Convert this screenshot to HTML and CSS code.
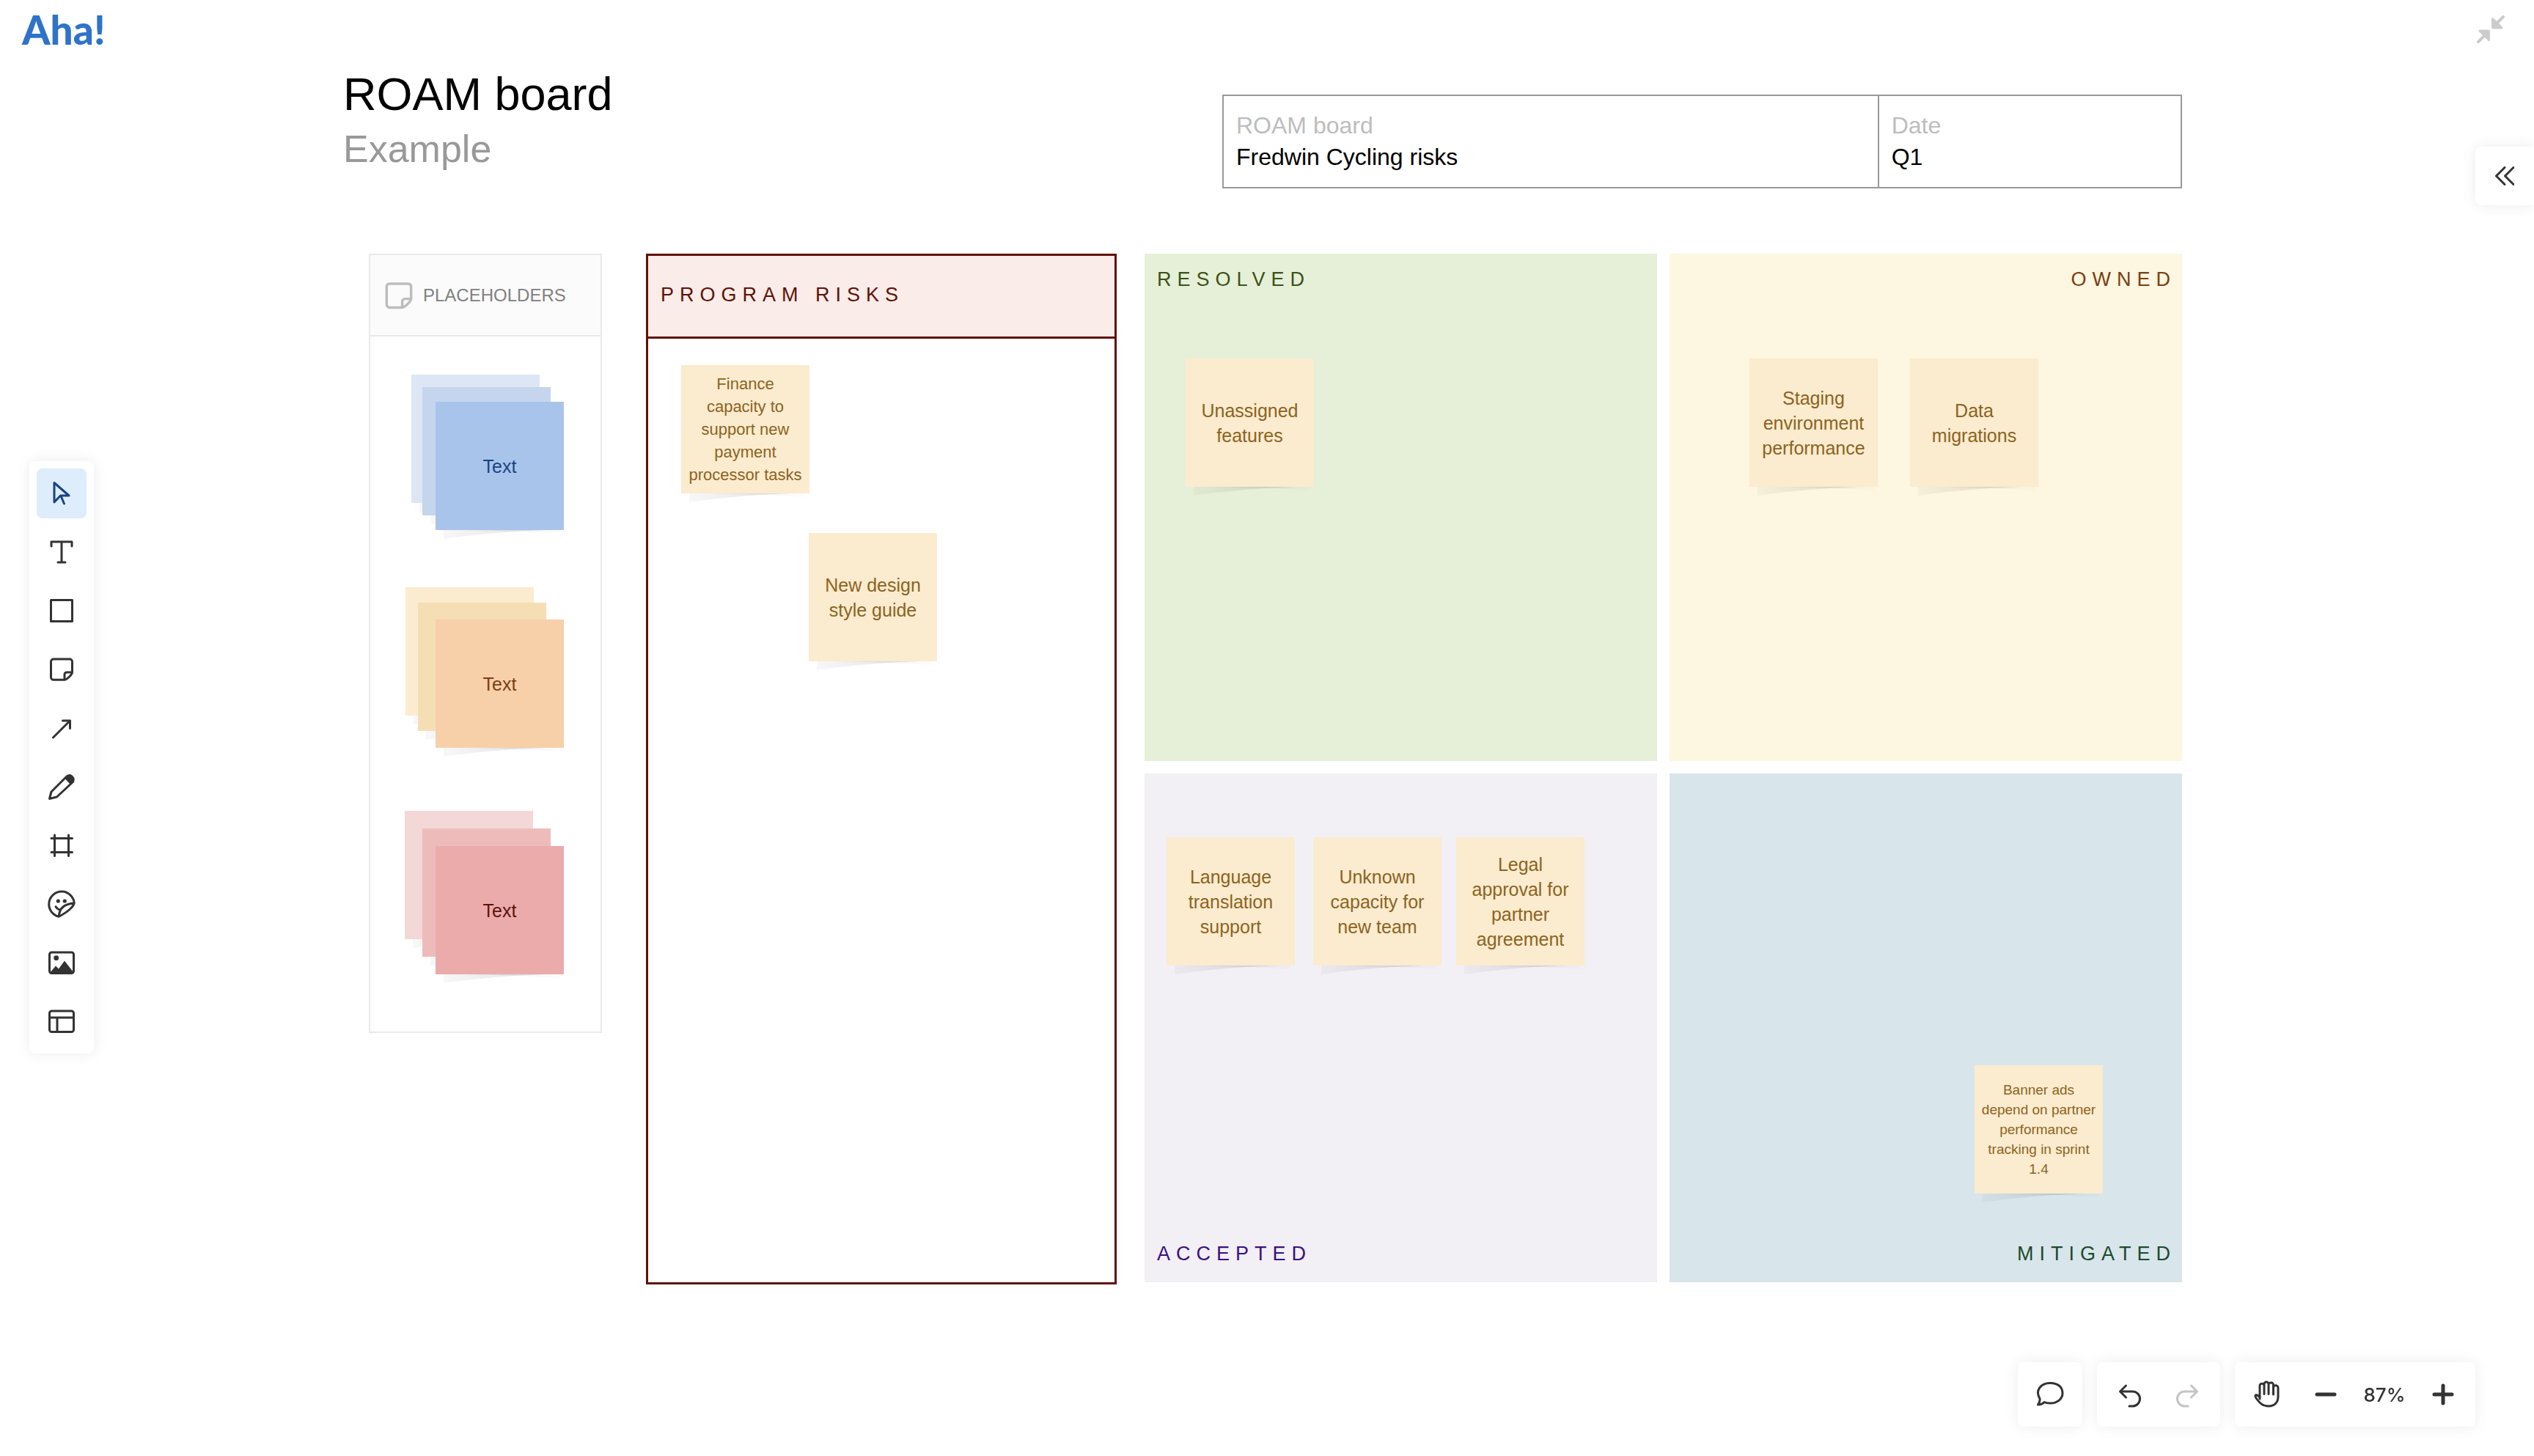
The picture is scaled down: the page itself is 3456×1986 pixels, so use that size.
FILE: index.html
```html
<!DOCTYPE html>
<html lang="en">
<head>
    <meta charset="UTF-8">
    <meta name="viewport" content="width=device-width, initial-scale=1.0">
    <title>ROAM board</title>
    <link rel="stylesheet" href="styles.css">
</head>
<body>

    <!-- Shared shapes -->
    <svg class="defs" width="0" height="0" aria-hidden="true">
        <defs>
            <linearGradient id="shadowLeft">
                <stop offset="0" stop-color="#000" stop-opacity="0.03"/>
                <stop offset="1" stop-color="#000" stop-opacity="0.12"/>
            </linearGradient>
            <linearGradient id="shadowRight">
                <stop offset="0" stop-color="#000" stop-opacity="0.08"/>
                <stop offset="1" stop-color="#000" stop-opacity="0.01"/>
            </linearGradient>
            <symbol id="noteShadow" viewBox="0 0 175 12">
                <path d="M11 0H150Q80 2 11 12Z" fill="url(#shadowLeft)"/>
                <path d="M40 0H170V5Q110 1 40 0Z" fill="url(#shadowRight)"/>
            </symbol>
            <symbol id="noteIcon" viewBox="0 0 40 40">
                <path d="M9 6H31a3.500 3.500 0 0 1 3.500 3.500V24c0 3-7.500 10.300-10.500 10.300H9A3.500 3.500 0 0 1 5.500 31V9.500A3.500 3.500 0 0 1 9 6ZM24 34V27a3 3 0 0 1 3-3h7"/>
            </symbol>
        </defs>
    </svg>

    <!-- Header -->
    <header class="topbar">
        <a class="logo" href="#">Aha!</a>
        <button class="collapse" type="button" aria-label="Exit full screen">
            <svg width="38" height="38" viewBox="0 0 38 38">
                <path d="M36 2 27 11M2 36l9-9" stroke="currentColor" stroke-width="4" stroke-linecap="round"/>
                <path d="M21.500 4.500v11q0 1.500 1.500 1.500h11L21.500 4.500ZM16.500 33.500v-11q0-1.500-1.500-1.500H4l12.500 12.500Z" fill="currentColor" stroke="currentColor" stroke-width="3" stroke-linejoin="round"/>
            </svg>
        </button>
    </header>

    <main class="workspace">

        <!-- Drawing tools -->
        <nav class="toolbar" aria-label="Tools">
            <button class="tool active" type="button" aria-label="Select">
                <svg class="icon" viewBox="0 0 40 40"><path d="M10 5.500V32l8.500-9H30ZM19 23.500l4.500 10.500"/></svg>
            </button>
            <button class="tool" type="button" aria-label="Text tool">
                <svg class="icon" viewBox="0 0 40 40"><path d="M6 12V6H34v6M20 6V34M15 34H25"/></svg>
            </button>
            <button class="tool" type="button" aria-label="Shape">
                <svg class="icon" viewBox="0 0 40 40"><path d="M5.500 5.500H34.500V34.500H5.500Z"/></svg>
            </button>
            <button class="tool" type="button" aria-label="Sticky note">
                <svg class="icon"><use href="#noteIcon"/></svg>
            </button>
            <button class="tool" type="button" aria-label="Line">
                <svg class="icon" viewBox="0 0 40 40"><path d="M8.500 33 31.500 10M21.500 10h10v10.500"/></svg>
            </button>
            <button class="tool" type="button" aria-label="Pen">
                <svg class="icon" viewBox="0 0 40 40">
                    <path d="M3.500 36.500 6 27 27 6a5.700 5.700 0 0 1 8 8L13.500 34Z"/>
                    <path d="M24 8.500 28 4.500Q31 2 34 5L36 7Q38 10 36 13L32 17Z" fill="currentColor" stroke="none"/>
                </svg>
            </button>
            <button class="tool" type="button" aria-label="Frame">
                <svg class="icon" viewBox="0 0 40 40"><path d="M10.500 6V34.500M29.500 6V34.500M6 10.500H34.500M6 29.500H34.500"/></svg>
            </button>
            <button class="tool" type="button" aria-label="Sticker">
                <svg class="icon" viewBox="0 0 40 40">
                    <path d="M16.300 37.300A17.300 17.300 0 1 1 37.300 19Q36 23 31 27.500T16.300 37.300ZM16.300 37.300Q17 20 37.300 19M12 23.700Q14.500 27.500 18.700 28"/>
                    <circle cx="15.300" cy="16" r="2.600" fill="currentColor" stroke="none"/>
                    <circle cx="24.300" cy="16" r="2.600" fill="currentColor" stroke="none"/>
                </svg>
            </button>
            <button class="tool" type="button" aria-label="Image">
                <svg class="icon" viewBox="0 0 40 40">
                    <rect x="3.500" y="6" width="33" height="28.500" rx="3"/>
                    <circle cx="12.700" cy="13.700" r="3.400" fill="currentColor" stroke="none"/>
                    <path d="M4 34 12 24.500 16 28.500 24 17.500 36 33V35H5Z" fill="currentColor" stroke="none"/>
                </svg>
            </button>
            <button class="tool" type="button" aria-label="Template">
                <svg class="icon" viewBox="0 0 40 40">
                    <rect x="3.500" y="6" width="33" height="28.500" rx="3"/>
                    <path d="M4 15H36M14 15V34"/>
                </svg>
            </button>
        </nav>

        <!-- Board -->
        <section class="board">
            <div class="board-head">
                <div>
                    <h1 class="title">ROAM board</h1>
                    <p class="subtitle">Example</p>
                </div>
                <dl class="info">
                    <div class="info-cell">
                        <dt>ROAM board</dt>
                        <dd>Fredwin Cycling risks</dd>
                    </div>
                    <div class="info-cell">
                        <dt>Date</dt>
                        <dd>Q1</dd>
                    </div>
                </dl>
            </div>

            <div class="columns">
                <div class="placeholders">
                    <div class="placeholders-head">
                        <svg class="icon icon-note"><use href="#noteIcon"/></svg>
                        <h2 class="placeholders-title">PLACEHOLDERS</h2>
                    </div>
                    <div class="placeholders-body">
                        <div class="note blue-1"><svg class="shadow"><use href="#noteShadow"/></svg></div>
                        <div class="note blue-2"><svg class="shadow"><use href="#noteShadow"/></svg></div>
                        <div class="note blue-3">Text<svg class="shadow"><use href="#noteShadow"/></svg></div>

                        <div class="note orange-1"><svg class="shadow"><use href="#noteShadow"/></svg></div>
                        <div class="note orange-2"><svg class="shadow"><use href="#noteShadow"/></svg></div>
                        <div class="note orange-3">Text<svg class="shadow"><use href="#noteShadow"/></svg></div>

                        <div class="note red-1"><svg class="shadow"><use href="#noteShadow"/></svg></div>
                        <div class="note red-2"><svg class="shadow"><use href="#noteShadow"/></svg></div>
                        <div class="note red-3">Text<svg class="shadow"><use href="#noteShadow"/></svg></div>
                    </div>
                </div>

                <div class="risks">
                    <div class="risks-head"><h2 class="label">PROGRAM RISKS</h2></div>
                    <div class="risks-body">
                        <div class="note note-medium note-finance">Finance capacity to support new payment processor tasks<svg class="shadow"><use href="#noteShadow"/></svg></div>
                        <div class="note note-design">New design style guide<svg class="shadow"><use href="#noteShadow"/></svg></div>
                    </div>
                </div>

                <div class="quadrants">
                    <div class="quadrant resolved">
                        <h2 class="label">RESOLVED</h2>
                        <div class="note note-unassigned">Unassigned features<svg class="shadow"><use href="#noteShadow"/></svg></div>
                    </div>
                    <div class="quadrant owned">
                        <h2 class="label">OWNED</h2>
                        <div class="note note-staging">Staging environment performance<svg class="shadow"><use href="#noteShadow"/></svg></div>
                        <div class="note note-data">Data migrations<svg class="shadow"><use href="#noteShadow"/></svg></div>
                    </div>
                    <div class="quadrant accepted">
                        <h2 class="label">ACCEPTED</h2>
                        <div class="note note-language">Language translation support<svg class="shadow"><use href="#noteShadow"/></svg></div>
                        <div class="note note-unknown">Unknown capacity for new team<svg class="shadow"><use href="#noteShadow"/></svg></div>
                        <div class="note note-legal">Legal approval for partner agreement<svg class="shadow"><use href="#noteShadow"/></svg></div>
                    </div>
                    <div class="quadrant mitigated">
                        <h2 class="label">MITIGATED</h2>
                        <div class="note note-small note-banner">Banner ads depend on partner performance tracking in sprint 1.4<svg class="shadow"><use href="#noteShadow"/></svg></div>
                    </div>
                </div>
            </div>
        </section>

        <button class="panel-toggle" type="button" aria-label="Open panel">
            <svg class="icon icon-chevrons" viewBox="0 0 26 26"><path d="M13 1.500 1.500 13 13 24.500M25 1.500 13.500 13 25 24.500"/></svg>
        </button>
    </main>

    <!-- Canvas controls -->
    <div class="controls">
        <div class="control-group">
            <button class="tool" type="button" aria-label="Comment">
                <svg class="icon" viewBox="0 0 40 40"><path d="M6 26C-1 14 8 4.500 20 4.500S37 11 37 18.500 30 32 20 32Q15 32 12 30.500 9 34 3.500 34 6.500 30 6 26Z"/></svg>
            </button>
        </div>
        <div class="control-group">
            <button class="tool" type="button" aria-label="Undo">
                <svg class="icon" viewBox="0 0 40 40"><path d="M15.500 8 7.500 16l8 8M8 16H24.500a10 10 0 0 1 0 20H20"/></svg>
            </button>
            <button class="tool" type="button" aria-label="Redo" disabled>
                <svg class="icon" viewBox="0 0 40 40"><path d="M24.500 8 32.500 16l-8 8M32 16H15.500a10 10 0 0 0 0 20H20"/></svg>
            </button>
        </div>
        <div class="control-group">
            <button class="tool" type="button" aria-label="Pan">
                <svg class="icon" viewBox="0 0 40 40"><path d="M10 26V8.500A3 3 0 0 1 16 8V19.500M16 8V6A3 3 0 0 1 22 6V19.500M22 6.500A3 3 0 0 1 28.500 8V20M28.500 10.500A3 3 0 0 1 35 11.500V23C35 31 30 36 22 36 14 36 10 32 5 25 2 20 6 19 10 24"/></svg>
            </button>
            <button class="tool" type="button" aria-label="Zoom out">
                <svg class="icon icon-bold" viewBox="0 0 40 40"><path d="M8 20H32"/></svg>
            </button>
            <button class="tool zoom" type="button">87%</button>
            <button class="tool" type="button" aria-label="Zoom in">
                <svg class="icon icon-bold" viewBox="0 0 40 40"><path d="M8 20H32M20 8V32"/></svg>
            </button>
        </div>
    </div>

</body>
</html>
```
FILE: styles.css
```css
/* styles.css */

* {
    box-sizing: border-box;
}

body {
    font-family: "Liberation Sans", Arial, sans-serif;
    background-color: #fff;
    color: #000;
    margin: 0;
    min-height: 100vh;
    display: flex;
    flex-direction: column;
}

h1, h2, p, dl, dd {
    margin: 0;
    font-weight: normal;
}

button {
    border: 0;
    padding: 0;
    background: none;
    font: inherit;
    color: inherit;
    cursor: pointer;
}

.defs {
    position: absolute;
}

/* Header styles */
.topbar {
    display: flex;
    justify-content: space-between;
    align-items: center;
    height: 80px;
    padding: 0 40px 0 30px;
}

.logo {
    font-family: Lato, sans-serif;
    font-size: 55px;
    font-weight: 900;
    line-height: 80px;
    color: #2f73c9;
    text-decoration: none;
}

.collapse {
    color: #ccc;
    line-height: 0;
}

.workspace {
    flex: 1;
    display: flex;
    align-items: flex-start;
}

/* Icons */
.icon {
    width: 40px;
    height: 40px;
    fill: none;
    stroke: currentColor;
    stroke-width: 3;
    stroke-linecap: round;
    stroke-linejoin: round;
}

.icon-bold {
    stroke-width: 5;
}

.icon-chevrons {
    width: 26px;
    height: 26px;
}

.icon-note {
    width: 46px;
    height: 46px;
    color: #bdbdbd;
}

/* Toolbar styles */
.toolbar,
.control-group,
.panel-toggle {
    background-color: #fff;
    border-radius: 8px;
    box-shadow: 0 0 20px rgba(0, 0, 0, 0.08);
}

.toolbar {
    display: flex;
    flex-direction: column;
    gap: 12px;
    align-self: center;
    margin-left: 40px;
    padding: 10px;
}

.tool {
    display: flex;
    align-items: center;
    justify-content: center;
    width: 68px;
    height: 68px;
    border-radius: 8px;
    color: #333;
}

.tool.active {
    background-color: #deedfc;
    color: #174582;
}

.tool:disabled {
    color: #c4c4c4;
}

.panel-toggle {
    display: flex;
    align-items: center;
    justify-content: center;
    width: 80px;
    height: 80px;
    margin-top: 120px;
    border-radius: 8px 0 0 8px;
    color: #333;
}

/* Board styles */
.board {
    flex: 1;
    margin: 10px 400px 0 340px;
}

.board-head {
    display: grid;
    grid-template-columns: 1199fr 1309fr;
    align-items: start;
    margin-bottom: 89px;
}

.title {
    font-size: 63px;
    line-height: 76px;
}

.subtitle {
    font-size: 52px;
    line-height: 74px;
    color: #999;
}

.info {
    display: grid;
    grid-template-columns: 893fr 414fr;
    margin-top: 39px;
    border: 2px solid #999;
    font-size: 32px;
    line-height: 43px;
}

.info-cell {
    padding: 19px 17px;
}

.info-cell + .info-cell {
    border-left: 2px solid #999;
}

.info dt {
    color: #bdbdbd;
}

.columns {
    display: grid;
    grid-template-columns: 340fr 642fr 1415fr;
    gap: 38px;
    padding-left: 35px;
}

/* Placeholders */
.placeholders {
    align-self: start;
    margin-right: 22px;
    border: 2px solid #e9e9e9;
}

.placeholders-head {
    display: flex;
    align-items: center;
    gap: 10px;
    height: 111px;
    padding-left: 16px;
    background-color: #fbfbfb;
    border-bottom: 2px solid #e9e9e9;
}

.placeholders-title {
    font-size: 24px;
    color: #808080;
}

.placeholders-body {
    position: relative;
    height: 948px;
}

/* Program risks */
.risks {
    display: flex;
    flex-direction: column;
    border: 3px solid #5e1208;
}

.risks-head {
    display: flex;
    align-items: center;
    height: 113px;
    padding: 0 17px 4px;
    background-color: #faece8;
    border-bottom: 3px solid #5e1208;
    color: #5e1208;
}

.risks-body {
    position: relative;
    flex: 1;
}

.label {
    font-size: 27px;
    line-height: 34px;
    letter-spacing: 8px;
}

/* Quadrants */
.quadrants {
    display: grid;
    grid-template-columns: 1fr 1fr;
    grid-template-rows: 692px 694px;
    gap: 17px;
    padding-bottom: 3px;
}

.quadrant {
    position: relative;
    display: flex;
    padding: 18px 8px 22px 17px;
}

.resolved {
    background-color: #e6f0d8;
    color: #3c5216;
}

.owned {
    justify-content: flex-end;
    background-color: #fdf6e0;
    color: #7a3f12;
}

.accepted {
    align-items: flex-end;
    background-color: #f2eff5;
    color: #3b1080;
}

.mitigated {
    align-items: flex-end;
    justify-content: flex-end;
    background-color: #d8e5eb;
    color: #1b4a2b;
}

/* Sticky notes */
.note {
    position: absolute;
    display: flex;
    align-items: center;
    justify-content: center;
    width: 175px;
    height: 175px;
    padding: 8px;
    background-color: #fbebcf;
    color: #8c6420;
    font-size: 25px;
    line-height: 34px;
    text-align: center;
}

.note-medium {
    font-size: 22px;
    line-height: 31px;
}

.note-small {
    font-size: 19px;
    line-height: 27px;
}

.shadow {
    position: absolute;
    top: 100%;
    left: 0;
    width: 175px;
    height: 12px;
}

.blue-1 { left: 56px; top: 52px; background-color: #dde6f4; }
.blue-2 { left: 71px; top: 69px; background-color: #c5d5ee; }
.blue-3 { left: 89px; top: 89px; background-color: #a9c4ea; color: #174582; }

.orange-1 { left: 48px; top: 342px; background-color: #fbebcf; }
.orange-2 { left: 65px; top: 363px; background-color: #f6deb4; }
.orange-3 { left: 89px; top: 386px; background-color: #f7d0a9; color: #7a3f12; }

.red-1 { left: 47px; top: 647px; background-color: #f4d7d7; }
.red-2 { left: 71px; top: 671px; background-color: #eebbbb; }
.red-3 { left: 89px; top: 695px; background-color: #ebabab; color: #5e1208; }

.note-finance { left: 45px; top: 36px; }
.note-design { left: 219px; top: 265px; }
.note-unassigned { left: 56px; top: 143px; }
.note-staging { left: 109px; top: 143px; }
.note-data { left: 328px; top: 143px; }
.note-language { left: 30px; top: 87px; }
.note-unknown { left: 230px; top: 87px; }
.note-legal { left: 425px; top: 87px; }
.note-banner { left: 416px; top: 398px; }

/* Bottom controls */
.controls {
    position: fixed;
    right: 80px;
    bottom: 40px;
    display: flex;
    gap: 20px;
}

.control-group {
    display: flex;
    gap: 12px;
    padding: 10px;
}

.zoom {
    font-family: Inter, sans-serif;
    font-size: 26px;
    font-weight: 500;
}
```
